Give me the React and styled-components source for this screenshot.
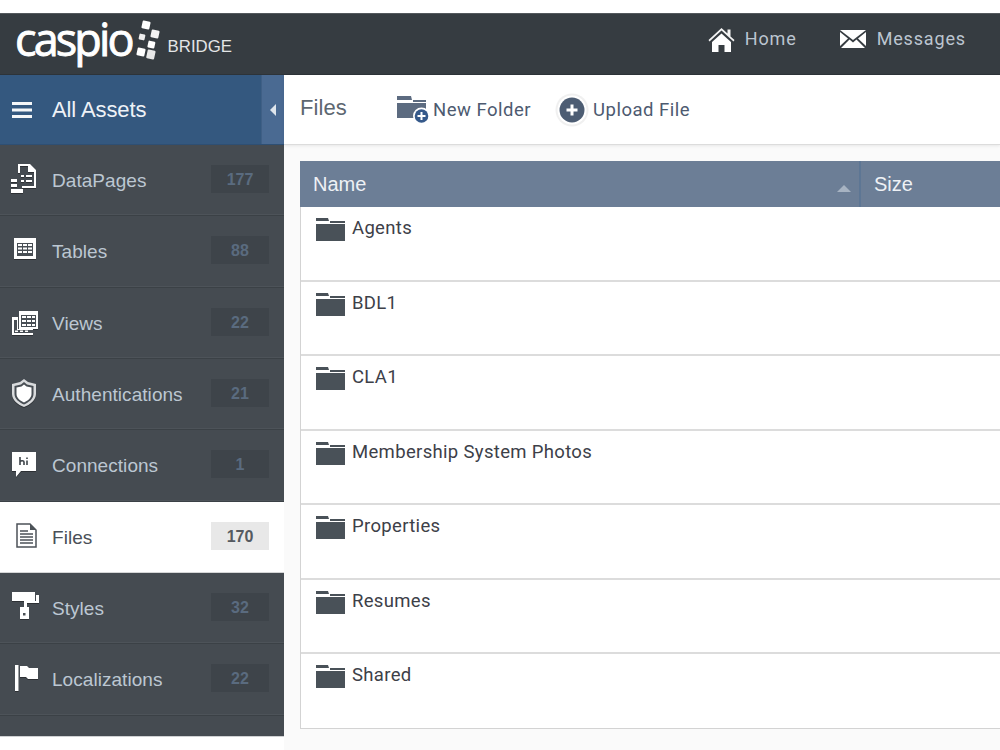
import styled, { createGlobalStyle } from 'styled-components';

const GlobalStyle = createGlobalStyle`
	html, body {
		margin: 0;
		padding: 0;
		background: #fff;
		font-family: "Liberation Sans", Arial, sans-serif;
	}
`;

const Page = styled.div`
	width: 1000px;
	height: 750px;
	padding-top: 13px;
	box-sizing: border-box;
	overflow: hidden;
	display: flex;
	flex-direction: column;
`;

const TopBar = styled.header`
	height: 62px;
	flex: none;
	box-sizing: border-box;
	background: #363c41;
	border-top: 1px solid #54595d;
	border-bottom: 1px solid #2d3338;
	display: flex;
	align-items: center;
	justify-content: space-between;
	padding: 0 34px 10px 15px;
`;

const Logo = styled.div`
	display: flex;
	align-items: center;
	color: #fff;
	margin-top: 10px;
`;

const LogoWord = styled.span`
	font-family: "Open Sans", sans-serif;
	font-size: 45px;
	line-height: 44px;
	letter-spacing: -2.9px;
	font-weight: 400;
	-webkit-text-stroke: 0.9px #fff;
	position: relative;
	top: -5px;
`;

const LogoSub = styled.span`
	font-family: "Liberation Sans", sans-serif;
	font-size: 16.8px;
	color: #e4e6e7;
	margin-left: 8px;
	position: relative;
	top: 3px;
`;

const TopNav = styled.nav`
	display: flex;
	align-items: center;
	gap: 43px;
`;

const TopLink = styled.a`
	display: flex;
	align-items: center;
	gap: ${p => p.$gap || 10}px;
	font-family: Roboto, sans-serif;
	font-size: 18px;
	letter-spacing: 0.85px;
	color: #bcc5d0;
`;

const TopLinkText = styled.span`
	position: relative;
	top: -1px;
`;

const Body = styled.div`
	flex: 1;
	display: flex;
	min-height: 0;
`;

const Sidebar = styled.aside`
	width: 284px;
	height: 662px;
	flex: none;
	background: #454b51;
	border-bottom: 1px solid #cfd1d3;
	box-sizing: border-box;
`;

const AllAssets = styled.div`
	height: 70px;
	box-sizing: border-box;
	background: #34587f;
	border-bottom: 1px solid #2e4f73;
	display: flex;
	align-items: center;
	color: #fff;
	padding-left: 12px;
`;

const AllAssetsLabel = styled.span`
	flex: 1;
	margin-left: 20px;
	font-size: 22px;
	letter-spacing: -0.1px;
	color: #eef2f7;
`;

const Collapse = styled.div`
	width: 23px;
	height: 100%;
	background: #4a6a92;
	display: flex;
	align-items: center;
	justify-content: center;
	box-sizing: border-box;
	border-left: 1px solid #3f5f85;
`;

const Arrow = styled.span`
	width: 0;
	height: 0;
	border-top: 6px solid transparent;
	border-bottom: 6px solid transparent;
	border-right: 6px solid #dfe5ec;
`;

const NavRow = styled.div`
	height: 71.33px;
	box-sizing: border-box;
	display: flex;
	align-items: center;
	padding: 0 15px 0 10px;
	background: ${p => (p.$active ? '#fff' : '#454b51')};
	border-bottom: 1px solid ${p => (p.$active ? '#d5d6d7' : '#3b4146')};
	box-shadow: ${p => (p.$active ? 'none' : 'inset 0 -1px 0 #4d5359')};
`;

const NavIcon = styled.span`
	width: 28px;
	height: 28px;
	flex: none;
	display: flex;
	align-items: center;
	justify-content: center;
	margin-top: -3px;
	transform: translate(${p => p.$x || 0}px, ${p => p.$y || 0}px);
	filter: ${p => (p.$active ? 'none' : 'drop-shadow(0 1px 0 rgba(0, 0, 0, 0.35))')};
`;

const NavLabel = styled.span`
	flex: 1;
	margin-left: 14px;
	font-size: 19px;
	letter-spacing: 0.05px;
	color: ${p => (p.$active ? '#4a5058' : '#bcc7d2')};
	position: relative;
	top: 1px;
`;

const Count = styled.span`
	width: 58px;
	height: 28px;
	box-sizing: border-box;
	padding-top: 2px;
	display: flex;
	align-items: center;
	justify-content: center;
	font-size: 16px;
	font-weight: 700;
	background: ${p => (p.$active ? '#e8e8e8' : '#3e444a')};
	color: ${p => (p.$active ? '#555a60' : '#5a6b7f')};
	position: relative;
	top: -1px;
`;

const Content = styled.main`
	flex: 1;
	min-width: 0;
	background: #fafafa;
`;

const Toolbar = styled.div`
	height: 70px;
	box-sizing: border-box;
	background: #fff;
	border-bottom: 1px solid #dcdcdc;
	box-shadow: 0 1px 3px rgba(0, 0, 0, 0.08);
	display: flex;
	align-items: center;
	padding-left: 16px;
`;

const ToolbarTitle = styled.h1`
	margin: 0 50px 0 0;
	font-size: 22px;
	font-weight: 400;
	letter-spacing: 0.1px;
	color: #5d6771;
	position: relative;
	top: -2px;
`;

const ToolButton = styled.a`
	display: flex;
	align-items: center;
	font-family: Roboto, sans-serif;
	font-size: 18.5px;
	letter-spacing: 0.5px;
	color: #4d5a70;
	margin-right: ${p => p.$gap || 0}px;
`;

const ToolText = styled.span`
	margin-left: ${p => p.$left || 0}px;
`;

const TableWrap = styled.div`
	margin: 16px 0 0 16px;
	border-left: 1px solid #d3d3d3;
	border-bottom: 1px solid #d3d3d3;
	background: #fff;
`;

const HeadRow = styled.div`
	height: 46px;
	display: flex;
	background: #6c7e96;
	color: #eef1f5;
	font-size: 20px;
	margin-left: -1px;
`;

const HeadCell = styled.div`
	width: ${p => p.$w}px;
	box-sizing: border-box;
	display: flex;
	align-items: center;
	justify-content: space-between;
	padding: 1px 8px 0 13px;
	border-right: ${p => (p.$last ? 'none' : '2px solid #5d7694')};
	flex: ${p => (p.$last ? 1 : 'none')};
`;

const SortArrow = styled.span`
	width: 0;
	height: 0;
	border-left: 7px solid transparent;
	border-right: 7px solid transparent;
	border-bottom: 7px solid #a7b3c2;
	margin-top: 8px;
`;

const FileRow = styled.div`
	height: 74.5px;
	box-sizing: border-box;
	display: flex;
	align-items: flex-start;
	padding: 10px 0 0 15px;
	border-bottom: 2px solid #dcdcdc;

	&:last-child {
		height: 73.5px;
		border-bottom: none;
	}
`;

const FileName = styled.span`
	margin-left: 7px;
	font-family: Roboto, sans-serif;
	font-size: 18.5px;
	letter-spacing: 0.33px;
	color: #3d4048;
	line-height: 22px;
`;

const FolderIcon = ({ color = '#495158', width = 29, height = 23 }) => (
	<svg width={width} height={height} viewBox="0 0 29 23" style={{ marginTop: 1, flex: 'none' }}>
		<path d="M0 0h12l1 3H0z" fill={color} />
		<path d="M14 3h15v2H14z" fill={color} />
		<path d="M0 6h29v17H0z" fill={color} />
	</svg>
);

const NewFolderIcon = () => (
	<svg width="36" height="28" viewBox="0 0 36 28" style={{ flex: 'none' }}>
		<path d="M0 0h14l1 4H0z" fill="#5c6b80" />
		<path d="M16 4h13v2H16z" fill="#5c6b80" />
		<path d="M0 7h29v15H0z" fill="#5c6b80" />
		<circle cx="24.5" cy="20" r="8.5" fill="#fff" />
		<circle cx="24.5" cy="20" r="6.8" fill="#35598a" />
		<path d="M24.5 16v8M20.5 20h8" stroke="#fff" strokeWidth="2" />
	</svg>
);

const UploadIcon = () => (
	<svg width="34" height="34" viewBox="0 0 34 34" style={{ flex: 'none', marginRight: 3 }}>
		<circle cx="17" cy="17" r="16.5" fill="#f0f0f0" />
		<circle cx="17" cy="17" r="14.5" fill="#fff" />
		<circle cx="17" cy="17" r="12.5" fill="#4d5d73" />
		<path d="M17 11.500v11M11.500 17h11" stroke="#fff" strokeWidth="3" />
	</svg>
);

const HomeIcon = () => (
	<svg width="27" height="25" viewBox="0 0 27 25">
		<path d="M0.500 13L13.500 1l6 5.500V2.500h3v7l4 3.500-1 1.500L13.500 3.500 1.500 14.500z" fill="#f4f4f4" />
		<path d="M4 15l9.500-8.500L23 15v10h-6.500v-7h-6v7H4z" fill="#fff" />
	</svg>
);

const MailIcon = () => (
	<svg width="26" height="18" viewBox="0 0 26 18">
		<path d="M0 0h26L13 10z" fill="#fff" />
		<path d="M0 2l8 6.500L0 16zM26 2l-8 6.500L26 16z" fill="#fff" />
		<path d="M1 18l8.500-8.500L13 12.500l3.500-3L25 18z" fill="#fff" />
	</svg>
);

const LogoDots = () => (
	<svg width="24" height="42" viewBox="0 0 24 42" style={{ marginLeft: 4, marginTop: -8 }}>
		<rect x="6" y="2" width="8" height="8" rx="1" fill="#fff" transform="rotate(12 10 6)" />
		<rect x="15" y="11" width="8" height="8" rx="1" fill="#f3f3f3" transform="rotate(12 19 15)" />
		<rect x="3" y="15" width="6" height="6" rx="1" fill="#eee" transform="rotate(12 6 18)" />
		<rect x="12" y="22" width="7" height="7" rx="1" fill="#fff" transform="rotate(12 15 25)" />
		<rect x="1" y="29" width="8" height="8" rx="1" fill="#fff" transform="rotate(12 5 33)" />
		<rect x="11" y="31" width="8" height="9" rx="1" fill="#e8e8e8" transform="rotate(12 15 35)" />
	</svg>
);

const icons = {
	hamburger: (
		<svg width="20" height="16" viewBox="0 0 20 16">
			<path d="M0 0h20v3H0zM0 6.500h20v3H0zM0 13h20v3H0z" fill="#f4f6f8" />
		</svg>
	),
	datapages: (
		<svg width="28" height="31" viewBox="0 0 28 31">
			<path d="M8 1h12l6 6v18H12v-2h12V9h-6V3h-8v7H8z" fill="#fff" />
			<path d="M11 12h3v2h-3zM16 12h6v2h-6zM11 17h3v2h-3zM16 17h6v2h-6z" fill="#fff" />
			<path d="M1 16h6v3H1zM1 21h6v3H1zM1 26h12v4H1z" fill="#fff" />
		</svg>
	),
	tables: (
		<svg width="22" height="21" viewBox="0 0 22 21">
			<path d="M0 0h22v21H0z" fill="#fff" />
			<path d="M3 5h16v13H3z" fill="#484e54" />
			<path d="M4 6h4v2H4zM9 6h4v2H9zM14 6h4v2h-4zM4 9.500h4v2H4zM9 9.500h4v2H9zM14 9.500h4v2h-4zM4 13h4v2H4zM9 13h4v2H9zM14 13h4v2h-4z" fill="#fff" />
		</svg>
	),
	views: (
		<svg width="26" height="24" viewBox="0 0 26 24">
			<path d="M7 0h19v18H7z" fill="#fff" />
			<path d="M9 4h15v12H9z" fill="#484e54" />
			<path d="M10 5h4v2h-4zM15 5h4v2h-4zM20 5h3v2h-3zM10 9h4v2h-4zM15 9h4v2h-4zM20 9h3v2h-3zM10 13h4v2h-4zM15 13h4v2h-4zM20 13h3v2h-3z" fill="#fff" />
			<path d="M0 6h6v12h15v6H0z" fill="#fff" />
			<path d="M2 9h3v10h16v3H2z" fill="#484e54" />
			<path d="M3 19.500h3v1.500H3zM8 19.500h3v1.500H8zM13 19.500h3v1.500h-3z" fill="#fff" />
		</svg>
	),
	shield: (
		<svg width="24" height="28" viewBox="0 0 24 28">
			<path d="M12 0l4 3 8 2v10c0 6-6 11-12 13C6 26 0 21 0 15V5l8-2z" fill="#d9dbdd" />
			<path d="M12 3l3 2.500 6.500 1.500v8c0 5-5 8.500-9.500 10.500C7.500 23.500 2.500 20 2.500 15V7L9 5.500z" fill="#484e54" />
			<path d="M12 5.500l2.500 2 5 1v6.500c0 4-4 7-7.500 8.500-3.500-1.500-7.500-4.500-7.500-8.500V8.500l5-1z" fill="#fff" />
		</svg>
	),
	hi: (
		<svg width="24" height="25" viewBox="0 0 24 25">
			<path d="M0 0h24v19H9l-5 6v-6H0z" fill="#fff" />
			<path d="M8 5v8M8 9.500c1-1 4-1 4 .5v3M15 5.500v1.500M15 8.500V13" stroke="#3e444a" strokeWidth="1.600" fill="none" />
		</svg>
	),
	file: (
		<svg width="21" height="25" viewBox="0 0 21 25">
			<path d="M1 1h13l6 6v17H1z" fill="#fff" stroke="#4c5258" strokeWidth="1.500" />
			<path d="M14 1v6h6z" fill="#4c5258" />
			<path d="M4 8h8M4 11h13M4 14h13M4 17h13M4 20h13" stroke="#4c5258" strokeWidth="1.400" />
		</svg>
	),
	styles: (
		<svg width="27" height="27" viewBox="0 0 27 27">
			<path d="M0 0h23v9H0z" fill="#fff" />
			<path d="M24 3h3v8H15v4h-3V9h12z" fill="#fff" />
			<path d="M8 15h9v12H8z" fill="#fff" />
			<rect x="11" y="21" width="2.500" height="2.500" fill="#484e54" />
		</svg>
	),
	flag: (
		<svg width="24" height="26" viewBox="0 0 24 26">
			<path d="M0 0h3.500v26H0z" fill="#fff" />
			<path d="M5 1h7l2 2h9v11H13l-2-2H5z" fill="#fff" />
		</svg>
	),
};

const navItems = [
	{ label: 'DataPages', count: 177, icon: 'datapages' },
	{ label: 'Tables', count: 88, icon: 'tables', x: 1, y: -1 },
	{ label: 'Views', count: 22, icon: 'views', x: 1, y: 2 },
	{ label: 'Authentications', count: 21, icon: 'shield' },
	{ label: 'Connections', count: 1, icon: 'hi', y: 1 },
	{ label: 'Files', count: 170, icon: 'file', active: true, x: 2 },
	{ label: 'Styles', count: 32, icon: 'styles', x: 1, y: -1 },
	{ label: 'Localizations', count: 22, icon: 'flag', x: 3 },
];

const folders = ['Agents', 'BDL1', 'CLA1', 'Membership System Photos', 'Properties', 'Resumes', 'Shared'];

export default function App() {
	return (
		<Page>
			<GlobalStyle />
			<TopBar>
				<Logo>
					<LogoWord>caspio</LogoWord>
					<LogoDots />
					<LogoSub>BRIDGE</LogoSub>
				</Logo>
				<TopNav>
					<TopLink><HomeIcon /><TopLinkText>Home</TopLinkText></TopLink>
					<TopLink $gap={11}><MailIcon /><TopLinkText>Messages</TopLinkText></TopLink>
				</TopNav>
			</TopBar>
			<Body>
				<Sidebar>
					<AllAssets>
						{icons.hamburger}
						<AllAssetsLabel>All Assets</AllAssetsLabel>
						<Collapse><Arrow /></Collapse>
					</AllAssets>
					{navItems.map(item => (
						<NavRow key={item.label} $active={item.active}>
							<NavIcon $active={item.active} $x={item.x} $y={item.y}>{icons[item.icon]}</NavIcon>
							<NavLabel $active={item.active}>{item.label}</NavLabel>
							<Count $active={item.active}>{item.count}</Count>
						</NavRow>
					))}
				</Sidebar>
				<Content>
					<Toolbar>
						<ToolbarTitle>Files</ToolbarTitle>
						<ToolButton $gap={24}><NewFolderIcon /><ToolText>New Folder</ToolText></ToolButton>
						<ToolButton><UploadIcon /><ToolText $left={1}>Upload File</ToolText></ToolButton>
					</Toolbar>
					<TableWrap>
						<HeadRow>
							<HeadCell $w={561}>Name<SortArrow /></HeadCell>
							<HeadCell $last>Size</HeadCell>
						</HeadRow>
						{folders.map(name => (
							<FileRow key={name}>
								<FolderIcon />
								<FileName>{name}</FileName>
							</FileRow>
						))}
					</TableWrap>
				</Content>
			</Body>
		</Page>
	);
}
